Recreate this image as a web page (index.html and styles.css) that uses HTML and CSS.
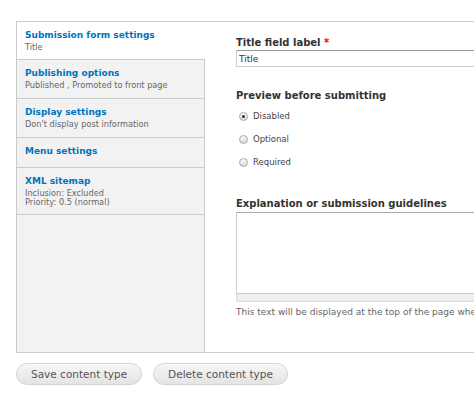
FILE: index.html
```html
<!DOCTYPE html>
<html lang="en">
  <head>
    <meta charset="UTF-8" />
    <title>Content type settings</title>
    <link rel="stylesheet" href="styles.css">
  </head>
  <body>
    <div class="vertical-tabs">
      <ul class="tab-list">
        <li class="tab active">
          <a href="#">Submission form settings</a>
          <span class="summary">Title</span>
        </li>
        <li class="tab">
          <a href="#">Publishing options</a>
          <span class="summary">Published , Promoted to front page</span>
        </li>
        <li class="tab">
          <a href="#">Display settings</a>
          <span class="summary">Don't display post information</span>
        </li>
        <li class="tab">
          <a href="#">Menu settings</a>
        </li>
        <li class="tab">
          <a href="#">XML sitemap</a>
          <span class="summary">Inclusion: Excluded<br>Priority: 0.5 (normal)</span>
        </li>
      </ul>

      <div class="tab-pane">
        <div class="form-item">
          <label class="field-label">Title field label <span class="required">*</span></label>
          <input class="text-input" type="text" value="Title">
        </div>

        <div class="form-item radios">
          <label class="field-label">Preview before submitting</label>
          <label class="radio"><span class="dot checked"></span>Disabled</label>
          <label class="radio"><span class="dot"></span>Optional</label>
          <label class="radio"><span class="dot"></span>Required</label>
        </div>

        <div class="form-item">
          <label class="field-label">Explanation or submission guidelines</label>
          <div class="textarea-wrap">
            <textarea class="textarea"></textarea>
            <div class="grippie"></div>
          </div>
          <p class="description">This text will be displayed at the top of the page when creating or editing content of this type.</p>
        </div>
      </div>
    </div>

    <div class="actions">
      <button class="btn">Save content type</button>
      <button class="btn">Delete content type</button>
    </div>
  </body>
</html>
```

FILE: styles.css
```css
* {
  margin: 0;
  padding: 0;
  box-sizing: border-box;
}
html,
body {
  background-color: #fff;
  overflow: hidden;
}
body {
  font-family: "DejaVu Sans", Verdana, sans-serif;
  color: #333;
  width: 474px;
  height: 398px;
}
ul li {
  list-style: none;
}

/* tabs box */
.vertical-tabs {
  display: flex;
  margin: 21px 0 0 16px;
  width: 520px;
  height: 332px;
  border: 1px solid #ccc;
  border-right: none;
}
.tab-list {
  width: 188px;
  flex-shrink: 0;
  background-color: #f2f2f2;
  border-right: 1px solid #ccc;
}
.tab {
  padding: 7px 8px 7px 8px;
  border-bottom: 1px solid #ccc;
  height: 39px;
}
.tab:nth-child(4) {
  height: 30px;
}
.tab:nth-child(5) {
  height: 47px;
}
.tab.active {
  background-color: #fff;
  margin-right: -1px;
  height: 38px;
}
.tab a {
  display: block;
  color: #0074bd;
  font-weight: bold;
  font-size: 9px;
  text-decoration: none;
  line-height: 12px;
}
.summary {
  display: block;
  color: #666;
  font-size: 8.2px;
  line-height: 9px;
  margin-top: 2px;
}

/* right side */
.tab-pane {
  flex: 1;
  padding: 14px 0 0 31px;
}
.form-item {
  margin-bottom: 22px;
}
.form-item.radios {
  margin-bottom: 29px;
}
.field-label {
  display: block;
  font-weight: bold;
  font-size: 10px;
  line-height: 13px;
  color: #333;
}
.required {
  color: #e00;
}
.text-input {
  display: block;
  width: 300px;
  height: 17px;
  margin-top: 1px;
  border: 1px solid #ccc;
  border-top-color: #999;
  padding: 0 2px;
  font-family: "DejaVu Sans", Verdana, sans-serif;
  font-size: 9px;
  color: #333;
}
.radios .field-label {
  margin-bottom: 8px;
}
.radio {
  display: flex;
  align-items: center;
  font-size: 8.5px;
  color: #444;
  height: 12px;
  margin-bottom: 11px;
}
.dot {
  width: 9px;
  height: 9px;
  border-radius: 50%;
  border: 1px solid #aaa;
  background: linear-gradient(#fafafa, #d8d8d8);
  margin: 0 5px 0 3px;
  position: relative;
}
.dot.checked::after {
  content: "";
  position: absolute;
  left: 2px;
  top: 2px;
  width: 3px;
  height: 3px;
  border-radius: 50%;
  background-color: #333;
}
.textarea-wrap {
  width: 300px;
  margin-top: 2px;
}
.textarea {
  display: block;
  width: 100%;
  height: 82px;
  border: 1px solid #ccc;
  border-top-color: #aaa;
  resize: none;
}
.grippie {
  height: 8px;
  background-color: #eee;
  border: 1px solid #ddd;
  border-top: none;
}
.description {
  font-size: 9px;
  color: #666;
  margin-top: 5px;
  white-space: nowrap;
}

/* buttons */
.actions {
  display: flex;
  gap: 11px;
  margin: 10px 0 0 16px;
}
.btn {
  font-family: "DejaVu Sans", Verdana, sans-serif;
  font-size: 10.5px;
  color: #555;
  height: 22px;
  padding: 0 14px;
  border: 1px solid #d4d4d4;
  border-radius: 11px;
  background: linear-gradient(#f6f6f6, #e4e4e4);
  cursor: pointer;
}
```
